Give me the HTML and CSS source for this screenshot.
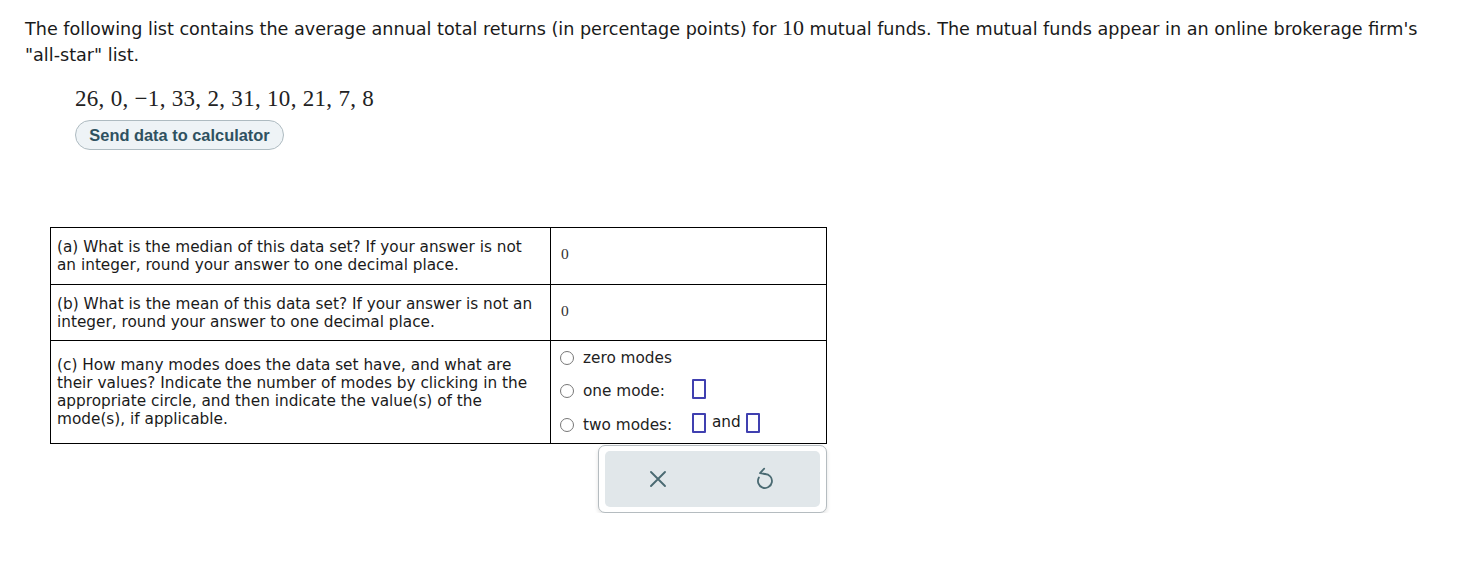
FILE: index.html
```html
<!DOCTYPE html>
<html>
<head>
<meta charset="utf-8">
<link rel="stylesheet" href="styles.css">
</head>
<body>
<div class="page">
  <p class="intro">The following list contains the average annual total returns (in percentage points) for <span class="num">10</span> mutual funds. The mutual funds appear in an online brokerage firm's "all-star" list.</p>
  <div class="data">26, 0, &minus;1, 33, 2, 31, 10, 21, 7, 8</div>
  <button class="send">Send data to calculator</button>

  <div class="qa">
    <table class="qtable">
      <tr class="r1">
        <td class="q">(a) What is the median of this data set? If your answer is not an integer, round your answer to one decimal place.</td>
        <td class="a"><span class="val">0</span></td>
      </tr>
      <tr class="r2">
        <td class="q">(b) What is the mean of this data set? If your answer is not an integer, round your answer to one decimal place.</td>
        <td class="a"><span class="val">0</span></td>
      </tr>
      <tr class="r3">
        <td class="q">(c) How many modes does the data set have, and what are their values? Indicate the number of modes by clicking in the appropriate circle, and then indicate the value(s) of the mode(s), if applicable.</td>
        <td class="a modes">
          <div class="opt o1"><span class="radio"></span><span class="lbl">zero modes</span></div>
          <div class="opt o2"><span class="radio"></span><span class="lbl w">one mode:</span><span class="box"></span></div>
          <div class="opt o3"><span class="radio"></span><span class="lbl w">two modes:</span><span class="box"></span><span class="and">and</span><span class="box"></span></div>
        </td>
      </tr>
    </table>
    <div class="toolrow">
      <div class="tools">
        <div class="toolinner">
          <svg class="ico" width="18" height="18" viewBox="0 0 18 18"><path d="M2 2 L16 16 M16 2 L2 16" stroke="#4a6a72" stroke-width="1.9" fill="none" stroke-linecap="round"/></svg>
          <svg class="ico" width="20" height="24" viewBox="0 0 20 24"><path d="M10 7 A7 7 0 1 1 3.9 10.5" stroke="#4a6a72" stroke-width="1.8" fill="none" stroke-linecap="round"/><path d="M9.2 1.6 L5 6.2 L10 7" stroke="#4a6a72" stroke-width="1.8" fill="none" stroke-linecap="round" stroke-linejoin="round"/></svg>
        </div>
      </div>
    </div>
  </div>
</div>
</body>
</html>
```
FILE: styles.css
```css
html, body {
  margin: 0;
  padding: 0;
  background: #ffffff;
}
.page {
  padding: 15px 25px 0 25px;
  font-family: "DejaVu Sans", Verdana, sans-serif;
  color: #1a1a1a;
}
.intro {
  margin: 0;
  font-size: 17.6px;
  line-height: 26px;
}
.intro .num {
  font-family: "Liberation Serif", "Times New Roman", serif;
  font-size: 22px;
}
.data {
  margin: 18px 0 0 50px;
  font-family: "Liberation Serif", "Times New Roman", serif;
  font-size: 23px;
  letter-spacing: 0.3px;
  line-height: 26px;
  color: #222;
}
.send {
  display: block;
  margin: 8px 0 0 50px;
  width: 209px;
  height: 30px;
  border: 1px solid #aebbc1;
  border-radius: 15px;
  background: #eef3f6;
  color: #2e5160;
  font-family: "Liberation Sans", Arial, sans-serif;
  font-size: 16.4px;
  font-weight: bold;
  padding: 0;
}
.qa {
  margin: 77px 0 0 25px;
  width: 777px;
}
.qtable {
  border-collapse: collapse;
  width: 777px;
  font-size: 15.3px;
  line-height: 18px;
}
.qtable td {
  border: 1px solid #000;
  vertical-align: middle;
}
.q {
  width: 487px;
  padding: 0 6px;
}
.r1 td { height: 56px; }
.r2 td { height: 55px; }
.r3 td { height: 102px; }
.a {
  padding: 0 10px;
}
.val {
  font-family: "Liberation Serif", "Times New Roman", serif;
  font-size: 15.5px;
  color: #333;
  position: relative;
  top: -2px;
}
.qtable td.modes {
  padding: 0 6px;
  vertical-align: top;
}
.opt {
  display: flex;
  align-items: center;
  height: 34px;
}
.opt.o1 { height: 33px; }
.radio {
  width: 14px;
  height: 14px;
  border: 1px solid #777;
  border-radius: 50%;
  margin: 0 9px 0 3px;
  box-sizing: border-box;
  flex: none;
}
.lbl {
  color: #222;
}
.lbl.w { width: 109px; }
.box {
  width: 14px;
  height: 20px;
  border: 2px solid #4040b0;
  box-sizing: border-box;
  border-radius: 1px;
  margin-top: -4px;
}
.and {
  margin: -6px 5px 0 6px;
}
.toolrow {
  display: flex;
  justify-content: flex-end;
  margin-top: 1px;
}
.tools {
  width: 229px;
  height: 68px;
  box-sizing: border-box;
  border: 1px solid #b5bcc0;
  border-radius: 7px;
  background: #fff;
  box-shadow: 0 2px 4px rgba(0,0,0,0.12);
  padding: 5px 6px;
}
.toolinner {
  height: 56px;
  background: #e1e7ea;
  border-radius: 5px;
  display: flex;
  align-items: center;
  justify-content: space-between;
  padding: 0 45px 0 44px;
}
```
